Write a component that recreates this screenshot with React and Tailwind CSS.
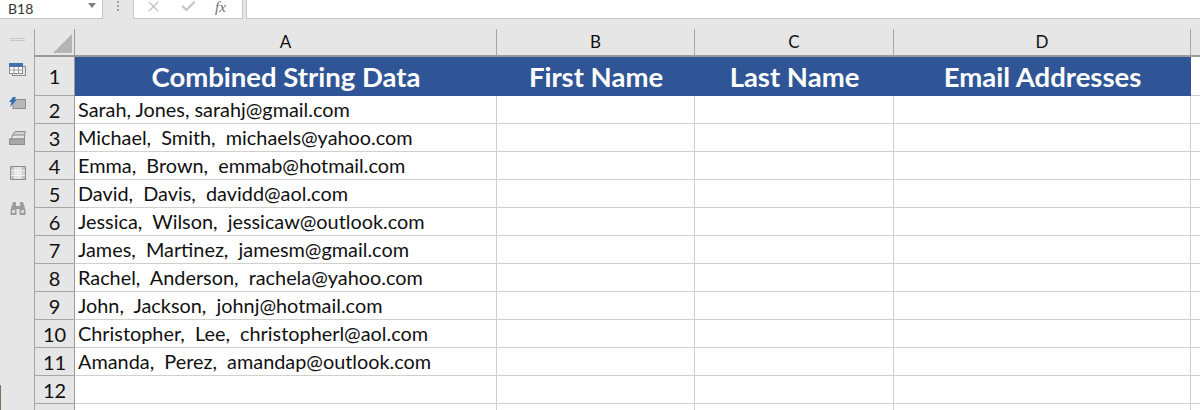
import { X, Check } from 'lucide-react'

const rows = [
  'Sarah, Jones, sarahj@gmail.com',
  'Michael,  Smith,  michaels@yahoo.com',
  'Emma,  Brown,  emmab@hotmail.com',
  'David,  Davis,  davidd@aol.com',
  'Jessica,  Wilson,  jessicaw@outlook.com',
  'James,  Martinez,  jamesm@gmail.com',
  'Rachel,  Anderson,  rachela@yahoo.com',
  'John,  Jackson,  johnj@hotmail.com',
  'Christopher,  Lee,  christopherl@aol.com',
  'Amanda,  Perez,  amandap@outlook.com',
  '',
  '',
]

const gridCols = 'grid grid-cols-[40px_422px_198px_199px_297px_1fr]'

function FormulaBar() {
  return (
    <div className="h-[19px] flex bg-[#e6e6e6] overflow-hidden">
      <div className="w-[103px] h-[19px] bg-white border-r border-b border-[#c6c6c6] flex items-start justify-between pl-2 pr-[6px] text-[14px] leading-[17px] text-[#333]">
        <span>B18</span>
        <span className="mt-[3px] w-0 h-0 border-x-[4px] border-x-transparent border-t-[5px] border-t-[#808080]"></span>
      </div>
      <div className="w-[30px] flex flex-col items-center pt-[1px] gap-[2px]">
        <span className="w-[2px] h-[2px] bg-[#a0a0a0]"></span>
        <span className="w-[2px] h-[2px] bg-[#a0a0a0]"></span>
        <span className="w-[2px] h-[2px] bg-[#a0a0a0]"></span>
      </div>
      <div className="w-[110px] h-[19px] bg-white border-x border-b border-[#c6c6c6] flex items-start pl-[11px]">
        <X size={17} strokeWidth={2} className="text-[#c4c4c4] -mt-[2px]" />
        <Check size={17} strokeWidth={3} className="text-[#c4c4c4] -mt-[2px] ml-[18px]" />
        <span className="text-[15px] italic text-[#707070] font-['Liberation_Serif',serif] leading-[15px] ml-[18px]">fx</span>
      </div>
      <div className="w-[3px]"></div>
      <div className="flex-1 h-[19px] bg-white border-l border-b border-[#c6c6c6]"></div>
    </div>
  )
}

function Sidebar() {
  return (
    <div className="w-[35px] h-[391px] bg-[#e6e6e6] flex flex-col items-center relative">
      <div className="absolute right-0 top-[10px] bottom-0 w-[1px] bg-[#a6a6a6]"></div>
      <div className="w-[15px] h-[3px] border-y border-[#c8c8c8] mt-[19px]"></div>
      <svg width="17" height="13" viewBox="0 0 17 13" className="mt-[22px]">
        <rect x="3.5" y="3.5" width="13" height="9" fill="#e6e6e6" stroke="#8c8c8c" />
        <rect x="0.5" y="0.5" width="13" height="10" fill="#fff" stroke="#8a8a8a" />
        <rect x="0" y="0" width="14" height="4" fill="#4472a8" />
        <path d="M0 7H14M5 4V11M9.5 4V11" stroke="#9a9a9a" />
      </svg>
      <svg width="17" height="12" viewBox="0 0 17 12" className="mt-[21px]">
        <rect x="4" y="2.5" width="12.5" height="9" fill="#b8b8b8" stroke="#8c8c8c" />
        <path d="M4 0H7L5.5 3H7.5L1 10L2.5 5H0Z" fill="#2f6fb5" />
      </svg>
      <svg width="18" height="14" viewBox="0 0 18 14" className="mt-[22px]">
        <path d="M3 5L6 0.5H16.5L15 6" fill="#d0d0d0" stroke="#8c8c8c" />
        <path d="M2 8L4 4H16L15 8Z" fill="#e6e6e6" stroke="#8c8c8c" />
        <rect x="0.5" y="8" width="15" height="5.5" fill="#a8a8a8" stroke="#8c8c8c" />
      </svg>
      <svg width="16" height="14" viewBox="0 0 16 14" className="mt-[21px]">
        <rect x="0.5" y="0.5" width="15" height="13" fill="#c4c4c4" stroke="#8c8c8c" />
        <rect x="5" y="1" width="6" height="12" fill="#dedede" />
        <path d="M5 1V13M8 1V13M11 1V13M1 4.5H15M1 7H15M1 9.5H15" stroke="#f4f4f4" />
      </svg>
      <svg width="16" height="13" viewBox="0 0 16 13" className="mt-[22px]">
        <path d="M3 0H6V4H10V0H13L15.5 8V13H9.5V7H6.5V13H0.5V8Z" fill="#9c9c9c" />
        <rect x="2" y="8" width="3" height="3" fill="#d8d8d8" />
        <rect x="11" y="8" width="3" height="3" fill="#d8d8d8" />
      </svg>
      <div className="absolute left-0 top-[366px] w-[1px] h-[25px] bg-[#6b7d5e]"></div>
    </div>
  )
}

function ColumnHeader({ label }) {
  return (
    <div className="h-[28px] bg-[#e6e6e6] border-r border-[#a6a6a6] border-b-2 border-b-[#9a9a9a] flex items-center justify-center text-[17px] text-[#111]">
      {label}
    </div>
  )
}

function RowHeader({ n, height }) {
  return (
    <div className={`bg-[#e6e6e6] border-r border-[#9a9a9a] border-b border-b-[#a6a6a6] flex items-center justify-center text-[20px] text-[#111] ${height}`}>
      {n}
    </div>
  )
}

function TitleCell({ children }) {
  return (
    <div className="h-[39px] bg-[#2f5597] flex items-center justify-center text-[27.5px] font-bold text-white">
      {children}
    </div>
  )
}

export default function App() {
  return (
    <div className="w-[1200px] h-[410px] bg-[#e6e6e6] overflow-hidden font-['Lato',sans-serif]">
      <FormulaBar />
      <div className="flex">
        <Sidebar />
        <div className="flex-1 mt-[10px]">
          <div className={gridCols}>
            <div className="h-[28px] bg-[#e6e6e6] border-r border-[#9a9a9a] border-b-2 border-b-[#9a9a9a] flex items-end justify-end pr-[2px] pb-[2px]">
              <span className="w-0 h-0 border-l-[19px] border-l-transparent border-b-[19px] border-b-[#b4b4b4]"></span>
            </div>
            <ColumnHeader label="A" />
            <ColumnHeader label="B" />
            <ColumnHeader label="C" />
            <ColumnHeader label="D" />
            <div className="h-[28px] bg-[#e6e6e6] border-b-2 border-b-[#9a9a9a]"></div>

            <RowHeader n={1} height="h-[39px]" />
            <TitleCell>Combined String Data</TitleCell>
            <TitleCell>First Name</TitleCell>
            <TitleCell>Last Name</TitleCell>
            <TitleCell>Email Addresses</TitleCell>
            <div className="h-[39px] bg-white border-b border-[#d0d0d0]"></div>

            {rows.map((text, i) => (
              <div key={i} className="contents">
                <RowHeader n={i < 11 ? i + 2 : ''} height="h-[28px]" />
                <div className="h-[28px] bg-white border-r border-b border-[#d0d0d0] flex items-center pl-[3px] text-[19.85px] text-[#111] whitespace-pre">{text}</div>
                <div className="h-[28px] bg-white border-r border-b border-[#d0d0d0]"></div>
                <div className="h-[28px] bg-white border-r border-b border-[#d0d0d0]"></div>
                <div className="h-[28px] bg-white border-r border-b border-[#d0d0d0]"></div>
                <div className="h-[28px] bg-white border-b border-[#d0d0d0]"></div>
              </div>
            ))}
          </div>
        </div>
      </div>
    </div>
  )
}
